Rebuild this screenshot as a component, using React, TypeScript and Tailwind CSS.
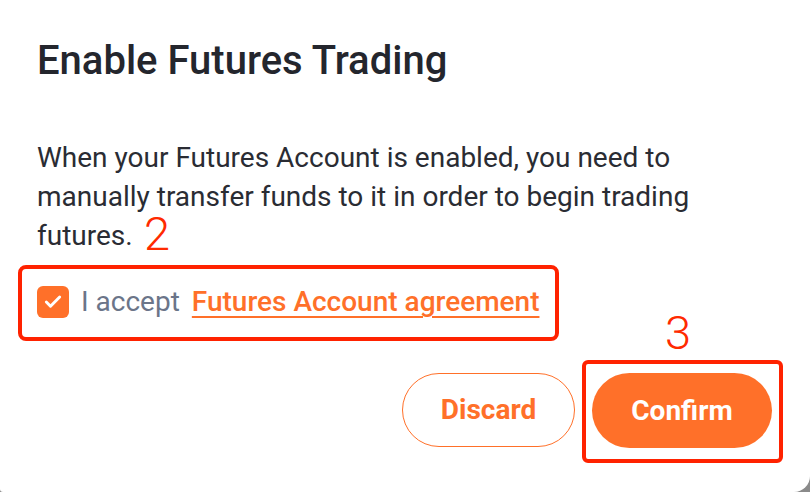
import { Check } from "lucide-react";

export default function App() {
  return (
    <div className="relative h-[492px] w-[810px] overflow-hidden bg-[#8a8a8a] font-['Roboto',sans-serif]">
      <div className="flex h-full w-full flex-col rounded-bl-[3px] rounded-br-[16px] bg-white pl-[37px] pr-[38px] pt-[37px]">
        <h1 className="text-[40px] font-medium leading-[48px] text-[#24262d]">
          Enable Futures Trading
        </h1>
        <p className="mt-[53px] w-[700px] text-[28px] leading-[39px] text-[#2a2c33]">
          When your Futures Account is enabled, you need to manually transfer
          funds to it in order to begin trading futures.
        </p>
        <div className="mt-[31px] flex items-center">
          <span className="flex h-[32px] w-[32px] items-center justify-center rounded-[6px] bg-[#ff7029]">
            <Check className="h-[20px] w-[20px] text-white" strokeWidth={3.5} />
          </span>
          <span className="ml-[12px] text-[28px] leading-[32px] text-[#6b7589]">
            I accept
          </span>
          <a className="ml-[12px] text-[28px] font-medium leading-[32px] text-[#ff7029] underline decoration-2 underline-offset-[5px]">
            Futures Account agreement
          </a>
        </div>
        <div className="mt-[55px] flex justify-end gap-[17px]">
          <button className="h-[74px] w-[173px] rounded-full border border-[#ff7029] text-[28px] font-bold text-[#ff7029]">
            Discard
          </button>
          <button className="h-[75px] w-[180px] rounded-full bg-[#ff7029] text-[28px] font-bold text-white">
            Confirm
          </button>
        </div>
      </div>

      {/* annotations */}
      <div className="absolute left-[18px] top-[265px] h-[76px] w-[541px] rounded-[8px] border-[4px] border-[#ff2200]" />
      <div className="absolute left-[582px] top-[360px] h-[103px] w-[201px] rounded-[6px] border-[4px] border-[#ff2200]" />
      <span className="absolute left-[144px] top-[212px] text-[47px] font-light leading-[44px] text-[#ff2a00]">
        2
      </span>
      <span className="absolute left-[665px] top-[311px] text-[47px] font-light leading-[44px] text-[#ff2a00]">
        3
      </span>
    </div>
  );
}
